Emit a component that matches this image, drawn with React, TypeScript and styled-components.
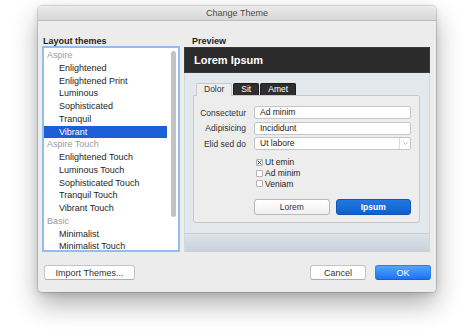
import React from "react";
import styled, { createGlobalStyle } from "styled-components";

const Global = createGlobalStyle`
  html, body { margin: 0; padding: 0; background: #ffffff; }
  body { width: 474px; height: 331px; overflow: hidden; font-family: "Liberation Sans", Arial, sans-serif; }
  * { box-sizing: border-box; }
`;

const Page = styled.div`
  padding: 6px 0 0 38px;
`;

const Window = styled.div`
  width: 398px;
  height: 286px;
  background: #ececec;
  border-radius: 4px;
  box-shadow: 0 0 0 1px rgba(0,0,0,0.12), 0 12px 26px rgba(0,0,0,0.32), 0 2px 6px rgba(0,0,0,0.12);
  display: flex;
  flex-direction: column;
  overflow: hidden;
`;

const TitleBar = styled.div`
  height: 15px;
  flex: none;
  background: linear-gradient(#ebebeb, #d6d6d6);
  border-bottom: 1px solid #bdbdbd;
  display: flex;
  align-items: center;
  justify-content: center;
  font-size: 9px;
  color: #4b4b4b;
`;

const Main = styled.div`
  display: grid;
  grid-template-columns: 138px 246px;
  grid-template-rows: 10px 206px;
  column-gap: 4px;
  padding: 15px 6px 0 4px;
`;

const SectionLabel = styled.div<{ $indent?: number }>`
  font-size: 9px;
  font-weight: bold;
  color: #1e1e1e;
  line-height: 10px;
  padding-left: ${(p) => p.$indent ?? 1}px;
`;

const ListBox = styled.div`
  border: 2px solid #93bdee;
  background: #ffffff;
  display: flex;
  overflow: hidden;
`;

const Rows = styled.div`
  flex: 1;
  padding-top: 1px;
`;

const Row = styled.div<{ $kind: "group" | "item"; $selected?: boolean }>`
  height: 12.75px;
  line-height: 12.75px;
  font-size: 9px;
  white-space: nowrap;
  padding-left: ${(p) => (p.$kind === "group" ? 3 : 15)}px;
  color: ${(p) => (p.$selected ? "#ffffff" : p.$kind === "group" ? "#9b9b9b" : "#262626")};
  background: ${(p) => (p.$selected ? "#1c5fd7" : "transparent")};
`;

const ScrollTrack = styled.div`
  width: 11px;
  flex: none;
  padding: 3px 2px 0 4px;
`;

const ScrollThumb = styled.div`
  width: 5px;
  height: 166px;
  border-radius: 3px;
  background: #c2c2c2;
`;

const PreviewCol = styled.div`
  display: flex;
  flex-direction: column;
  padding-top: 1px;
`;

const DarkHeader = styled.div`
  height: 26px;
  flex: none;
  background: #2b2b2b;
  border: 1px solid #3a3a3a;
  color: #ffffff;
  font-size: 11px;
  font-weight: bold;
  display: flex;
  align-items: center;
  padding-left: 9px;
`;

const PreviewArea = styled.div`
  flex: 1;
  display: flex;
  flex-direction: column;
  background: #e3e8ed;
  border-left: 1px solid #d3d8de;
  border-right: 1px solid #d3d8de;
`;

const PreviewBody = styled.div`
  padding: 10px 9px 10px 8px;
  border-bottom: 1px solid #c7ced6;
`;

const Strip = styled.div`
  flex: 1;
  background: linear-gradient(#dde3e9, #c8d1da);
`;

const Tabs = styled.div`
  display: flex;
  height: 12px;
  padding-left: 3px;
  gap: 1px;
`;

const Tab = styled.div<{ $active?: boolean }>`
  min-width: ${(p) => (p.$active ? 34 : 25)}px;
  padding: 0 ${(p) => (p.$active ? 7 : 7)}px;
  text-align: center;
  font-size: 8.5px;
  line-height: 11px;
  color: ${(p) => (p.$active ? "#333333" : "#ffffff")};
  background: ${(p) => (p.$active ? "#ededed" : "#2e2e2e")};
  border: 1px solid ${(p) => (p.$active ? "#c9c9c9" : "#1e1e1e")};
  border-bottom: none;
  border-radius: 2px 2px 0 0;
  position: relative;
  z-index: ${(p) => (p.$active ? 1 : 0)};
  margin-bottom: ${(p) => (p.$active ? -1 : 0)}px;
  height: ${(p) => (p.$active ? 13 : 12)}px;
`;

const TabPanel = styled.div`
  height: 128px;
  background: #ededed;
  border: 1px solid #c9c9c9;
  border-radius: 0 2px 3px 3px;
  padding: 10px 8px 0 0;
`;

const FormGrid = styled.div`
  display: grid;
  grid-template-columns: 60px 1fr;
  grid-auto-rows: 13px;
  row-gap: 2.5px;
  align-items: center;
`;

const FieldLabel = styled.div`
  font-size: 8.5px;
  color: #333333;
  text-align: right;
  padding-right: 8px;
  white-space: nowrap;
`;

const TextInput = styled.div`
  height: 13px;
  background: #ffffff;
  border: 1px solid #c6c6c6;
  border-radius: 2px;
  font-size: 8.5px;
  color: #222222;
  line-height: 11px;
  padding-left: 5px;
`;

const Select = styled(TextInput)`
  display: flex;
  padding-left: 0;
`;

const SelectValue = styled.div`
  flex: 1;
  padding-left: 5px;
`;

const SelectArrow = styled.div`
  width: 11px;
  border-left: 1px solid #dadada;
  display: flex;
  align-items: center;
  justify-content: center;
`;

const Checks = styled.div`
  margin: 7px 0 0 62px;
  display: flex;
  flex-direction: column;
`;

const CheckRow = styled.div`
  height: 10.7px;
  display: flex;
  align-items: center;
  gap: 2px;
  font-size: 8.5px;
  color: #262626;
`;

const Box = styled.div`
  width: 7px;
  height: 7px;
  background: #ffffff;
  border: 1px solid #b3b3b3;
  border-radius: 1px;
  display: flex;
  align-items: center;
  justify-content: center;
`;

const PreviewButtons = styled.div`
  margin: 10px 0 0 60px;
  display: flex;
  gap: 6px;
`;

const PButton = styled.div<{ $primary?: boolean }>`
  width: 76px;
  height: 16px;
  border-radius: 3px;
  font-size: 8.5px;
  display: flex;
  align-items: center;
  justify-content: center;
  font-weight: ${(p) => (p.$primary ? "bold" : "normal")};
  color: ${(p) => (p.$primary ? "#ffffff" : "#333333")};
  background: ${(p) => (p.$primary ? "linear-gradient(#2378e2, #0f60cc)" : "linear-gradient(#ffffff, #f0f0f0)")};
  border: 1px solid ${(p) => (p.$primary ? "#0c56b9" : "#b8b8b8")};
`;

const Footer = styled.div`
  display: flex;
  align-items: center;
  padding: 13px 5px 0 6px;
  gap: 9px;
`;

const Spacer = styled.div`
  flex: 1;
`;

const Button = styled.div<{ $w: number; $primary?: boolean }>`
  width: ${(p) => p.$w}px;
  height: 15px;
  border-radius: 3px;
  font-size: 9px;
  display: flex;
  align-items: center;
  justify-content: center;
  color: ${(p) => (p.$primary ? "#ffffff" : "#333333")};
  background: ${(p) => (p.$primary ? "linear-gradient(#56a3fb, #1b74f1)" : "#ffffff")};
  border: 1px solid ${(p) => (p.$primary ? "#2f7fe8" : "#c4c4c4")};
  border-bottom-color: ${(p) => (p.$primary ? "#1462d6" : "#aeaeae")};
`;

type Item = { label: string; kind: "group" | "item"; selected?: boolean };

const items: Item[] = [
  { label: "Aspire", kind: "group" },
  { label: "Enlightened", kind: "item" },
  { label: "Enlightened Print", kind: "item" },
  { label: "Luminous", kind: "item" },
  { label: "Sophisticated", kind: "item" },
  { label: "Tranquil", kind: "item" },
  { label: "Vibrant", kind: "item", selected: true },
  { label: "Aspire Touch", kind: "group" },
  { label: "Enlightened Touch", kind: "item" },
  { label: "Luminous Touch", kind: "item" },
  { label: "Sophisticated Touch", kind: "item" },
  { label: "Tranquil Touch", kind: "item" },
  { label: "Vibrant Touch", kind: "item" },
  { label: "Basic", kind: "group" },
  { label: "Minimalist", kind: "item" },
  { label: "Minimalist Touch", kind: "item" },
];

const checks = [
  { label: "Ut emin", checked: true },
  { label: "Ad minim", checked: false },
  { label: "Veniam", checked: false },
];

export default function App() {
  return (
    <Page>
      <Global />
      <Window>
        <TitleBar>Change Theme</TitleBar>
        <Main>
          <SectionLabel>Layout themes</SectionLabel>
          <SectionLabel $indent={8}>Preview</SectionLabel>
          <ListBox>
            <Rows>
              {items.map((it) => (
                <Row key={it.label} $kind={it.kind} $selected={it.selected}>
                  {it.label}
                </Row>
              ))}
            </Rows>
            <ScrollTrack>
              <ScrollThumb />
            </ScrollTrack>
          </ListBox>
          <PreviewCol>
            <DarkHeader>Lorem Ipsum</DarkHeader>
            <PreviewArea>
              <PreviewBody>
                <Tabs>
                  <Tab $active>Dolor</Tab>
                  <Tab>Sit</Tab>
                  <Tab>Amet</Tab>
                </Tabs>
                <TabPanel>
                  <FormGrid>
                    <FieldLabel>Consectetur</FieldLabel>
                    <TextInput>Ad minim</TextInput>
                    <FieldLabel>Adipisicing</FieldLabel>
                    <TextInput>Incididunt</TextInput>
                    <FieldLabel>Elid sed do</FieldLabel>
                    <Select>
                      <SelectValue>Ut labore</SelectValue>
                      <SelectArrow>
                        <svg width="5" height="3" viewBox="0 0 5 3">
                          <path d="M0.5 0.5 L2.5 2.5 L4.5 0.5" fill="none" stroke="#a8a8a8" strokeWidth="0.8" />
                        </svg>
                      </SelectArrow>
                    </Select>
                  </FormGrid>
                  <Checks>
                    {checks.map((c) => (
                      <CheckRow key={c.label}>
                        <Box>
                          {c.checked && (
                            <svg width="5" height="5" viewBox="0 0 5 5">
                              <path d="M0.5 0.5 L4.5 4.5 M4.5 0.5 L0.5 4.5" stroke="#333" strokeWidth="0.9" />
                            </svg>
                          )}
                        </Box>
                        {c.label}
                      </CheckRow>
                    ))}
                  </Checks>
                  <PreviewButtons>
                    <PButton>Lorem</PButton>
                    <PButton $primary>Ipsum</PButton>
                  </PreviewButtons>
                </TabPanel>
              </PreviewBody>
              <Strip />
            </PreviewArea>
          </PreviewCol>
        </Main>
        <Footer>
          <Button $w={91}>Import Themes...</Button>
          <Spacer />
          <Button $w={56}>Cancel</Button>
          <Button $w={56} $primary>
            OK
          </Button>
        </Footer>
      </Window>
    </Page>
  );
}
